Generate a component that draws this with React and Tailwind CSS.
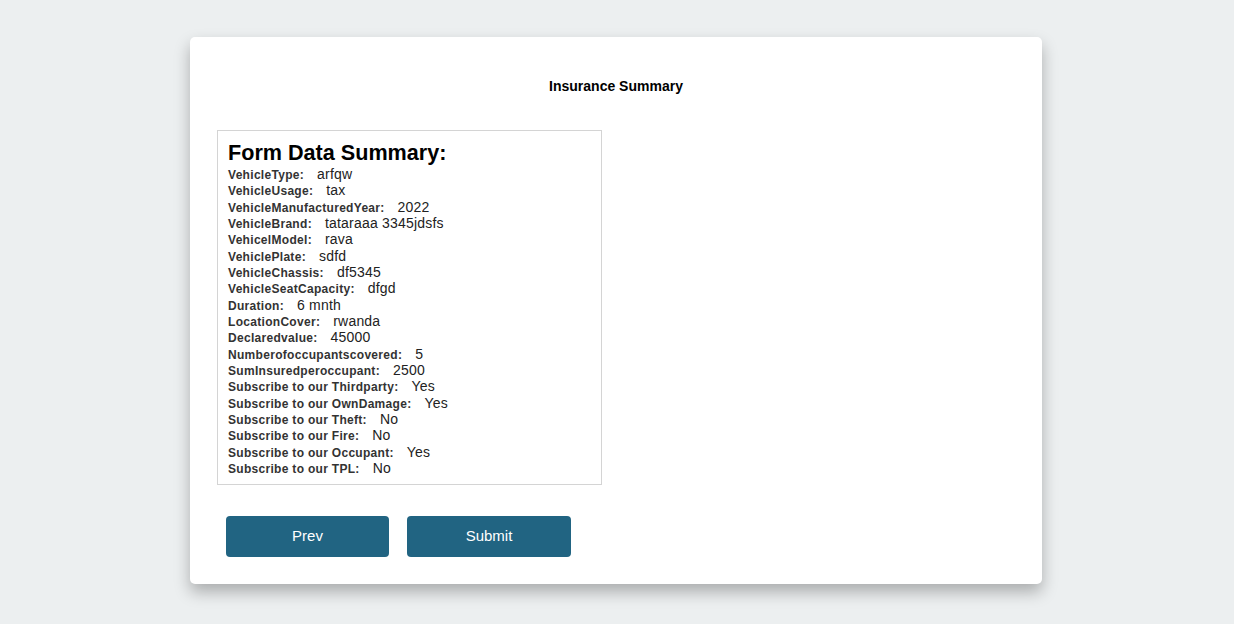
const rows = [
  ['VehicleType', 'arfqw'],
  ['VehicleUsage', 'tax'],
  ['VehicleManufacturedYear', '2022'],
  ['VehicleBrand', 'tataraaa 3345jdsfs'],
  ['VehicelModel', 'rava'],
  ['VehiclePlate', 'sdfd'],
  ['VehicleChassis', 'df5345'],
  ['VehicleSeatCapacity', 'dfgd'],
  ['Duration', '6 mnth'],
  ['LocationCover', 'rwanda'],
  ['Declaredvalue', '45000'],
  ['Numberofoccupantscovered', '5'],
  ['SumInsuredperoccupant', '2500'],
  ['Subscribe to our Thirdparty', 'Yes'],
  ['Subscribe to our OwnDamage', 'Yes'],
  ['Subscribe to our Theft', 'No'],
  ['Subscribe to our Fire', 'No'],
  ['Subscribe to our Occupant', 'Yes'],
  ['Subscribe to our TPL', 'No'],
]

export default function App() {
  return (
    <div className="min-h-[624px] bg-[#eceff0] pt-[37px] font-['Liberation_Sans',Arial,sans-serif] text-[#111]">
      <div className="ml-[190px] w-[852px] h-[547px] rounded-[5px] bg-white shadow-[0_8px_16px_rgba(0,0,0,0.28)] px-[27px] pt-[41px]">
        <h2 className="text-center text-[14px] font-bold leading-[16px] text-black">Insurance Summary</h2>
        <div className="mt-[36px] w-[385px] border border-[#d4d4d4] px-[10px] pt-[9px] pb-[8px]">
          <h3 className="text-[21.6px] font-bold leading-[26px] text-black">Form Data Summary:</h3>
          {rows.map(([k, v]) => (
            <div key={k} className="flex h-[16.33px] items-baseline text-[14px] leading-[16px] tracking-[0.2px] text-[#222]">
              <span className="text-[12px] font-bold tracking-[0.3px] text-[#333]">{k}:</span>
              <span className="ml-[13px]">{v}</span>
            </div>
          ))}
        </div>
        <div className="mt-[31px] ml-[9px] flex gap-[18px]">
          <button className="w-[163px] h-[41px] rounded-[4px] bg-[#216482] text-[15px] text-white">Prev</button>
          <button className="w-[164px] h-[41px] rounded-[4px] bg-[#216482] text-[15px] text-white">Submit</button>
        </div>
      </div>
    </div>
  )
}
